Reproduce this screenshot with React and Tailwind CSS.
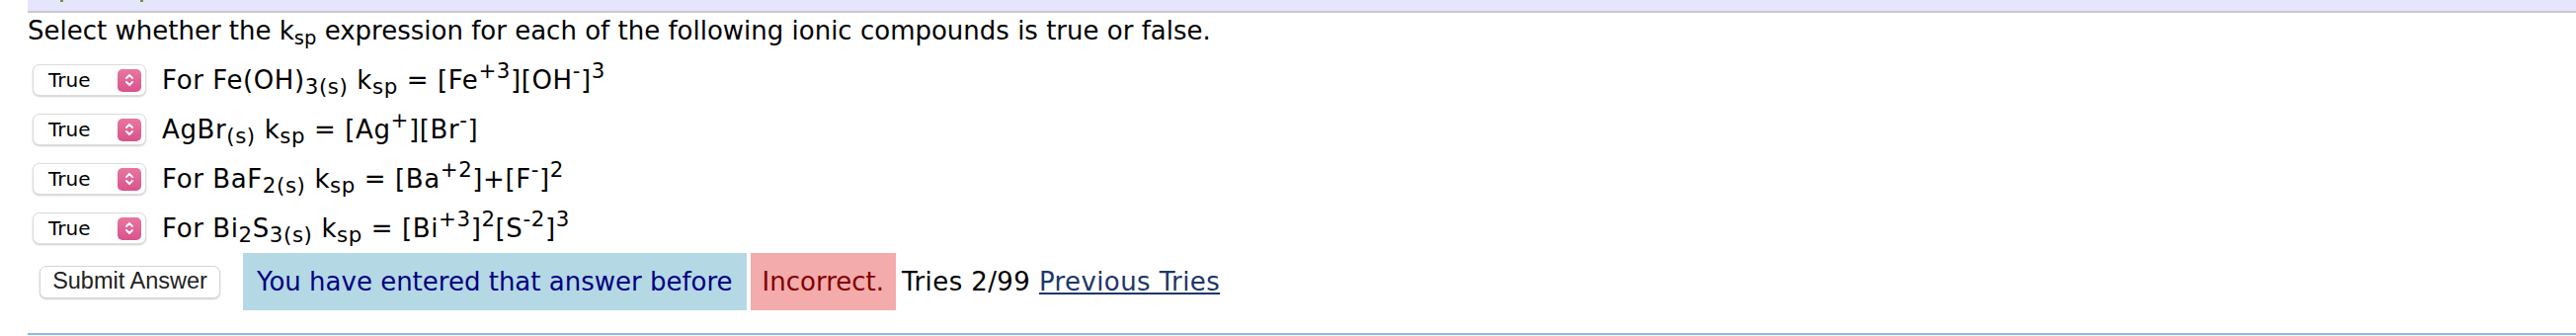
const rows = [
  {
    id: 1,
    text: (
      <>
        For Fe(OH)<sub>3(s)</sub> k<sub>sp</sub> = [Fe<sup>+3</sup>][OH<sup>-</sup>]<sup>3</sup>
      </>
    ),
  },
  {
    id: 2,
    text: (
      <>
        AgBr<sub>(s)</sub> k<sub>sp</sub> = [Ag<sup>+</sup>][Br<sup>-</sup>]
      </>
    ),
  },
  {
    id: 3,
    text: (
      <>
        For BaF<sub>2(s)</sub> k<sub>sp</sub> = [Ba<sup>+2</sup>]+[F<sup>-</sup>]<sup>2</sup>
      </>
    ),
  },
  {
    id: 4,
    text: (
      <>
        For Bi<sub>2</sub>S<sub>3(s)</sub> k<sub>sp</sub> = [Bi<sup>+3</sup>]<sup>2</sup>[S<sup>-2</sup>]<sup>3</sup>
      </>
    ),
  },
];

const Stepper = () => (
  <span className="flex h-[23px] w-[24px] items-center justify-center rounded-[5px] bg-gradient-to-b from-[#e8769f] to-[#d9528c]">
    <svg width="12" height="18" viewBox="0 0 12 18" fill="none">
      <path d="M3 7 L6 4 L9 7" stroke="white" strokeWidth="1.8" strokeLinecap="round" strokeLinejoin="round" />
      <path d="M3 11 L6 14 L9 11" stroke="white" strokeWidth="1.8" strokeLinecap="round" strokeLinejoin="round" />
    </svg>
  </span>
);

const TrueSelect = () => (
  <div className="flex h-[32px] w-[115px] shrink-0 items-center justify-between rounded-[7px] border border-[#dcdcdc] bg-white pl-[15px] pr-[4px] text-[20px] text-black shadow-[0_1px_2px_rgba(0,0,0,0.2)]">
    <span>True</span>
    <Stepper />
  </div>
);

const App = () => {
  return (
    <div className="h-[340px] w-full bg-white font-['DejaVu_Sans',Verdana,sans-serif] text-black">
      <div className="ml-[28px] flex h-[13px] items-start border-b-2 border-[#c9c9cf] bg-[#e5e5fb]">
        <span className="ml-[33px] h-[2px] w-[3px] bg-[#6f9a44]" />
        <span className="ml-[78px] h-[2px] w-[3px] bg-[#6f9a44]" />
      </div>

      <div className="ml-[28px] mt-[4px]">
        <p className="text-[26px] leading-[28px]">
          Select whether the k<sub>sp</sub> expression for each of the following ionic compounds is true or false.
        </p>

        <div className="mt-[11px]">
          {rows.map((row) => (
            <div key={row.id} className="flex h-[50px] items-center gap-[16px] pl-[5px]">
              <TrueSelect />
              <span className="text-[26px] leading-[28px] tracking-[0.6px] [&_sub]:text-[82%] [&_sup]:text-[82%]">
                {row.text}
              </span>
            </div>
          ))}
        </div>

        <div className="flex h-[58px] items-stretch">
          <div className="ml-[12px] mr-[23px] flex items-center">
            <button className="flex h-[33px] w-[183px] items-center justify-center rounded-[7px] border border-[#d6d6d6] bg-white font-['Liberation_Sans',Arial,sans-serif] text-[23.5px] text-[#222] shadow-[0_1px_2px_rgba(0,0,0,0.2)]">
              Submit Answer
            </button>
          </div>
          <div className="flex items-center bg-[#b5d8e5] px-[14px] text-[26px] text-[#000080]">
            You have entered that answer before
          </div>
          <div className="ml-[4px] flex items-center bg-[#f3abab] px-[12px] text-[26px] text-[#800000]">
            Incorrect.
          </div>
          <div className="flex items-center pl-[6px] text-[26px] tracking-[0.4px]">
            Tries 2/99&nbsp;
            <a href="#" className="text-[#1d3769] underline">
              Previous Tries
            </a>
          </div>
        </div>

        <div className="mt-[23px] h-[2px] bg-[#8cb9e3]" />
      </div>
    </div>
  );
};

export default App;
